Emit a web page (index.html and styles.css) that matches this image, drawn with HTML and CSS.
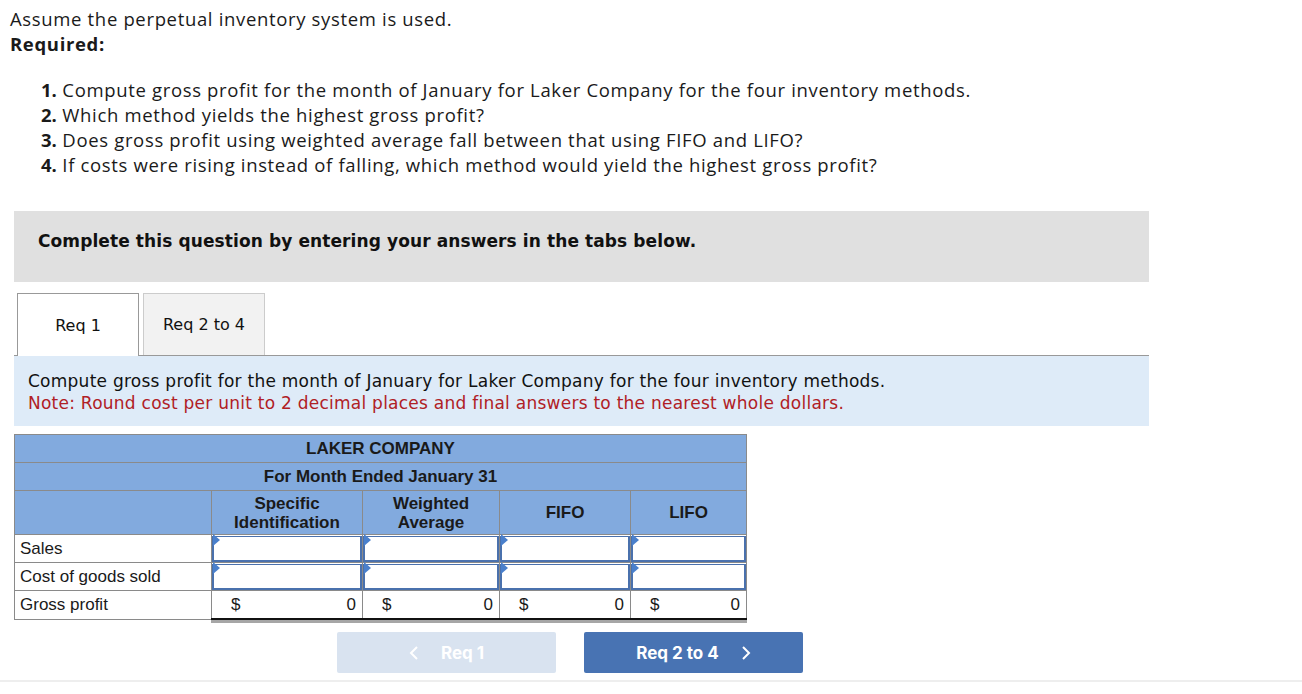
FILE: index.html
```html
<!DOCTYPE html>
<html>
<head>
<meta charset="utf-8">
<link rel="stylesheet" href="styles.css">
</head>
<body>
<div class="intro">
  <p class="line">Assume the perpetual inventory system is used.</p>
  <p class="line req"><b>Required:</b></p>
  <div class="reqlist">
    <p class="line"><b>1.</b> Compute gross profit for the month of January for Laker Company for the four inventory methods.</p>
    <p class="line"><b>2.</b> Which method yields the highest gross profit?</p>
    <p class="line"><b>3.</b> Does gross profit using weighted average fall between that using FIFO and LIFO?</p>
    <p class="line"><b>4.</b> If costs were rising instead of falling, which method would yield the highest gross profit?</p>
  </div>
</div>

<div class="main">
  <div class="banner">Complete this question by entering your answers in the tabs below.</div>

  <div class="tabs">
    <div class="tab active">Req 1</div>
    <div class="tab">Req 2 to 4</div>
  </div>

  <div class="instr">
    <p>Compute gross profit for the month of January for Laker Company for the four inventory methods.</p>
    <p class="note">Note: Round cost per unit to 2 decimal places and final answers to the nearest whole dollars.</p>
  </div>

  <table class="grid">
    <colgroup>
      <col class="c0"><col class="c1"><col class="c2"><col class="c3"><col class="c4">
    </colgroup>
    <tr class="h1"><th colspan="5">LAKER COMPANY</th></tr>
    <tr class="h1"><th colspan="5">For Month Ended January 31</th></tr>
    <tr class="h2"><th></th><th>Specific<br>Identification</th><th>Weighted<br>Average</th><th>FIFO</th><th>LIFO</th></tr>
    <tr class="row"><td class="lbl">Sales</td><td class="inp"><span class="box"></span></td><td class="inp"><span class="box"></span></td><td class="inp"><span class="box"></span></td><td class="inp"><span class="box"></span></td></tr>
    <tr class="row"><td class="lbl">Cost of goods sold</td><td class="inp"><span class="box"></span></td><td class="inp"><span class="box"></span></td><td class="inp"><span class="box"></span></td><td class="inp"><span class="box"></span></td></tr>
    <tr class="row total"><td class="lbl">Gross profit</td><td class="val"><span class="cur">$</span><span class="num">0</span></td><td class="val"><span class="cur">$</span><span class="num">0</span></td><td class="val"><span class="cur">$</span><span class="num">0</span></td><td class="val"><span class="cur">$</span><span class="num">0</span></td></tr>
  </table>

  <div class="nav">
    <button class="btn prev"><svg class="chev" width="10" height="16" viewBox="0 0 10 16"><polyline points="8,2 2,8 8,14" fill="none" stroke="currentColor" stroke-width="2"/></svg><span>Req 1</span></button>
    <button class="btn next"><span>Req 2 to 4</span><svg class="chev" width="10" height="16" viewBox="0 0 10 16"><polyline points="2,2 8,8 2,14" fill="none" stroke="currentColor" stroke-width="2"/></svg></button>
  </div>
</div>
<div class="footer"></div>
</body>
</html>
```

FILE: styles.css
```css
html, body { margin: 0; padding: 0; background: #fff; }
body { font-family: "Open Sans", "Liberation Sans", sans-serif; color: #1a1a1a; }
p { margin: 0; }

.intro { padding: 6px 0 0 10px; font-size: 18.5px; letter-spacing: 0.66px; }
.line { line-height: 25px; white-space: nowrap; }
.req b { font-weight: 700; }
.reqlist { margin-top: 21px; padding-left: 31px; }
.reqlist b { font-weight: 700; letter-spacing: 0; }

.main { padding-left: 14px; width: 1135px; margin-top: 34px; }

.banner {
  background: #e0e0e0;
  height: 71px;
  box-sizing: border-box;
  padding: 19px 0 0 24px;
  font-family: "DejaVu Sans", Verdana, sans-serif;
  font-weight: 700;
  font-size: 17px;
  letter-spacing: 0.1px;
  line-height: 22px;
  color: #111;
}

.tabs {
  margin-top: 11px;
  display: flex;
  gap: 4px;
  padding-left: 3px;
  border-bottom: 1px solid #999;
  height: 62px;
}
.tab {
  width: 122px;
  height: 62px;
  box-sizing: border-box;
  border: 1px solid #ccc;
  border-bottom: none;
  background: #f2f2f2;
  display: flex;
  align-items: center;
  justify-content: center;
  font-family: "DejaVu Sans", Verdana, sans-serif;
  font-size: 16px;
  color: #111;
}
.tab.active {
  background: #fff;
  border-color: #999;
  height: 63px;
  position: relative;
  z-index: 1;
}

.instr {
  background: #deebf8;
  height: 70px;
  box-sizing: border-box;
  padding: 14px 0 0 14px;
  font-family: "DejaVu Sans", Verdana, sans-serif;
  font-size: 17px;
  letter-spacing: 0.25px;
  line-height: 22px;
  color: #111;
  white-space: nowrap;
}
.instr .note { color: #b02025; }

.grid {
  margin-top: 8px;
  border-collapse: collapse;
  font-family: "Liberation Sans", Arial, sans-serif;
  font-size: 17px;
  color: #1a1a1a;
  table-layout: fixed;
  width: 732px;
}
.c0 { width: 197px; }
.c1 { width: 151px; }
.c2 { width: 137px; }
.c3 { width: 131px; }
.c4 { width: 116px; }

.grid th {
  background: #82aade;
  border: 1px solid #8a8a8a;
  font-weight: 700;
  line-height: 19px;
  padding: 0;
  color: #1a1a1a;
}
.h1 th { height: 27px; }
.h2 th { height: 43px; }

.grid td {
  border: 1px solid #8a8a8a;
  height: 27px;
  padding: 0;
  vertical-align: middle;
}
.lbl { padding-left: 5px !important; }

.inp { position: relative; }
.box {
  display: block;
  height: 23px;
  margin: 0;
  border: 2px solid #4a71ad;
  border-top-width: 1px;
  background: #fff;
}
.inp::before {
  content: "";
  position: absolute;
  left: 1px;
  top: 1px;
  border-top: 6px solid transparent;
  border-bottom: 6px solid transparent;
  border-left: 7px solid #4a80cc;
  height: 0;
  width: 0;
  margin-top: -2px;
}

.total td.val {
  border-top: 1px solid #111;
  border-bottom: 2px solid #111;
}
.total td.lbl { border-bottom: 1px solid #8a8a8a; }
.val { padding: 0 !important; }
.val .cur { float: left; padding-left: 19px; line-height: 26px; }
.val .num { float: right; padding-right: 6px; line-height: 26px; }
.total td.val { position: relative; }
.total td.val::after {
  content: "";
  position: absolute;
  left: -1px; right: -1px;
  bottom: -5px;
  height: 3px;
  background: #a6a6a6;
}

.nav {
  margin-top: 12px;
  display: flex;
  gap: 28px;
  padding-left: 323px;
}
.btn {
  width: 219px;
  height: 41px;
  border: none;
  border-radius: 2px;
  font-family: Inter, Roboto, sans-serif;
  font-weight: 700;
  font-size: 17px;
  color: #fff;
  display: flex;
  align-items: center;
  justify-content: center;
  gap: 22px;
  padding: 0;
}
.prev { background: #d9e3f0; }
.next { background: #4873b3; }

.footer {
  margin-top: 7px;
  border-top: 2px solid #eeeeee;
  height: 10px;
}
```
